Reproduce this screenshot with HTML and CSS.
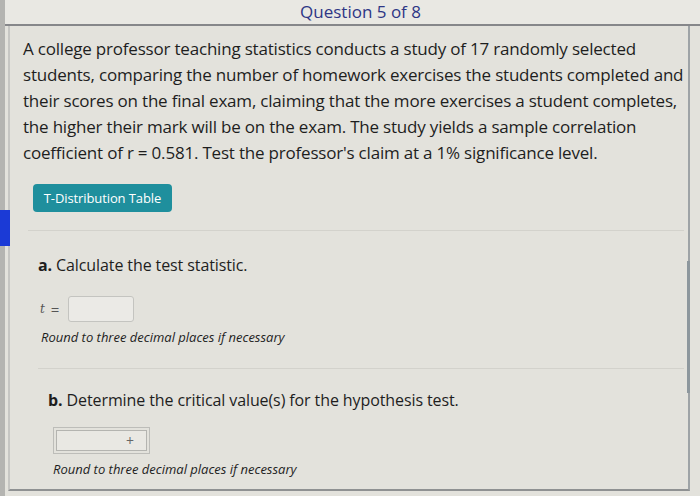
FILE: index.html
```html
<!DOCTYPE html>
<html>
<head>
<meta charset="utf-8">
<link rel="stylesheet" href="styles.css">
</head>
<body>
<div class="frame">
  <header class="qhead">Question 5 of 8</header>
  <main class="content">
    <p class="prompt">A college professor teaching statistics conducts a study of 17 randomly selected students, comparing the number of homework exercises the students completed and their scores on the final exam, claiming that the more exercises a student completes, the higher their mark will be on the exam. The study yields a sample correlation coefficient of r = 0.581. Test the professor's claim at a 1% significance level.</p>
    <div class="btnrow"><button class="tbtn">T-Distribution Table</button></div>
    <section class="part part-a">
      <p class="ptitle"><b>a.</b> Calculate the test statistic.</p>
      <div class="answer"><span class="var">t</span><span class="eq">=</span><span class="box"></span></div>
      <p class="hint">Round to three decimal places if necessary</p>
    </section>
    <section class="part part-b">
      <p class="ptitle"><b>b.</b> Determine the critical value(s) for the hypothesis test.</p>
      <div class="multi"><span class="box2"><span class="box2-inner"><span class="plus">+</span></span></span></div>
      <p class="hint">Round to three decimal places if necessary</p>
    </section>
    <div class="scroll-thumb"></div>
  </main>
  <div class="side-tab"></div>
</div>
</body>
</html>
```
FILE: styles.css
```css
html, body {
  margin: 0;
  padding: 0;
  background: #e3e2dc;
}
.frame {
  position: relative;
  width: 700px;
  height: 496px;
  overflow: hidden;
  font-family: "Open Sans", sans-serif;
  color: #1e1e1e;
  padding-left: 5px;
  box-sizing: border-box;
  background: linear-gradient(to right, #b4b4b1 0, #b4b4b1 5px, transparent 5px);
}
.qhead {
  height: 24px;
  border-bottom: 2px solid #86878a;
  background: #e9e8e3;
  text-align: center;
  font-size: 17px;
  line-height: 24px;
  color: #2e3685;
  padding-left: 16px;
}
.content {
  position: relative;
  margin-left: 3px;
  margin-right: 10px;
  border-left: 2px solid #c6c6c3;
  border-right: 2px solid #9ea3a6;
  border-bottom: 2px solid #8f9192;
  height: 465px;
  box-sizing: border-box;
}
.prompt {
  margin: 0;
  padding: 10px 0 0 13px;
  font-size: 17px;
  line-height: 26px;
  letter-spacing: -0.2px;
  color: #1e1e1e;
}
.btnrow {
  padding: 18px 0 0 23px;
}
.tbtn {
  font-family: "Open Sans", sans-serif;
  background: #1f8f9d;
  color: #fff;
  border: none;
  border-radius: 4px;
  width: 139px;
  height: 28px;
  font-size: 13px;
  letter-spacing: -0.1px;
  padding: 0;
}
.part {
  border-top: 1px solid #d3d2cc;
}
.part-a {
  margin: 18px 4px 0 18px;
  padding: 23px 0 0 10px;
}
.part-b {
  margin: 22px 4px 0 28px;
  padding: 20px 0 0 10px;
}
.ptitle {
  margin: 0;
  font-size: 16px;
  letter-spacing: -0.1px;
  color: #1e1e1e;
}
.ptitle b { font-weight: 700; }
.answer {
  display: flex;
  align-items: center;
  margin-top: 20px;
  padding-left: 2px;
}
.var {
  font-family: "DejaVu Serif", serif;
  font-style: italic;
  font-size: 12px;
  color: #555;
}
.eq {
  font-size: 15px;
  color: #555;
  margin: 0 9px 0 6px;
}
.box {
  width: 64px;
  height: 24px;
  border: 1.5px solid #c4c4c0;
  border-radius: 3px;
  background: #ebeae6;
}
.hint {
  margin: 6px 0 0 3px;
  font-size: 13px;
  font-style: italic;
  color: #1e1e1e;
}
.part-b .hint { margin-top: 6px; margin-left: 5px; }
.multi {
  margin-top: 16px;
  margin-left: 5px;
}
.box2 {
  display: inline-block;
  width: 91px;
  height: 21px;
  border: 1px solid #bdbdb9;
  padding: 2px;
  background: #e3e2dc;
}
.box2-inner {
  display: flex;
  align-items: center;
  justify-content: flex-end;
  height: 100%;
  border: 1px solid #b4b4b0;
  box-sizing: border-box;
  background: #e9e8e3;
}
.plus {
  font-size: 14px;
  color: #666;
  line-height: 1;
  margin-right: 12px;
}
.scroll-thumb {
  position: absolute;
  right: -2px;
  top: 235px;
  width: 3px;
  height: 132px;
  background: #8d979d;
}
.side-tab {
  position: absolute;
  left: 0;
  top: 210px;
  width: 10px;
  height: 36px;
  background: #1b3ad6;
}
```
